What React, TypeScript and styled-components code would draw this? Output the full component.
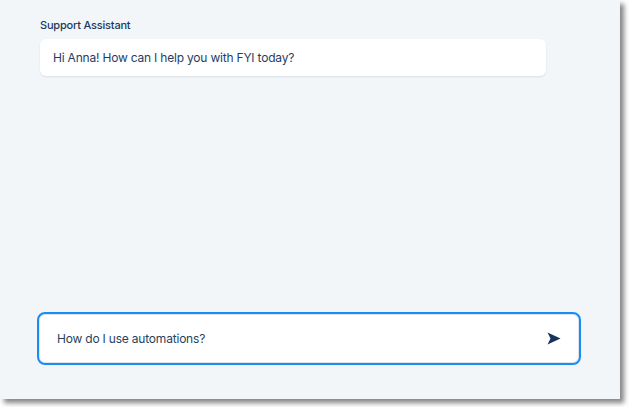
import React from "react";
import styled, { createGlobalStyle } from "styled-components";

const Global = createGlobalStyle`
  html, body { margin: 0; padding: 0; background: #ffffff; }
  body { font-family: Inter, "Noto Sans", "Liberation Sans", sans-serif; }
  * { box-sizing: border-box; }
`;

const Page = styled.div`
  width: 629px;
  height: 407px;
  background: #ffffff;
`;

const Panel = styled.div`
  width: 620px;
  height: 399px;
  background: #f3f6f9;
  box-shadow: 4px 4px 5px rgba(50, 50, 50, 0.6);
  display: flex;
  flex-direction: column;
  padding: 18px 39px 34px 37px;
`;

const Messages = styled.div`
  flex: 1;
  display: flex;
  flex-direction: column;
  padding-left: 3px;
`;

const Sender = styled.div`
  font-size: 11px;
  font-weight: 500;
  line-height: 14px;
  letter-spacing: -0.2px;
  color: #1b3960;
  margin-bottom: 7px;
`;

const Bubble = styled.div`
  width: 506px;
  height: 37px;
  background: #ffffff;
  border-radius: 6px;
  box-shadow: 0 1px 2px rgba(30, 60, 90, 0.12);
  display: flex;
  align-items: center;
  padding-left: 13px;
  font-size: 12px;
  letter-spacing: -0.2px;
  color: #1f3d66;
`;

const InputBox = styled.div`
  height: 53px;
  border: 2px solid #1a8cf5;
  border-radius: 8px;
  background: #ffffff;
  box-shadow: inset 0 0 0 1px #dfe4ea;
  display: flex;
  align-items: center;
  padding: 0 17px 0 18px;
`;

const InputText = styled.div`
  flex: 1;
  font-size: 12px;
  letter-spacing: -0.2px;
  color: #2a3f5c;
`;

const SendButton = styled.button`
  border: none;
  background: transparent;
  padding: 0;
  width: 16px;
  height: 14px;
  display: flex;
  align-items: center;
  justify-content: center;
  cursor: pointer;
`;

export default function App() {
  return (
    <>
      <Global />
      <Page>
        <Panel>
          <Messages>
            <Sender>Support Assistant</Sender>
            <Bubble>Hi Anna! How can I help you with FYI today?</Bubble>
          </Messages>
          <InputBox>
            <InputText>How do I use automations?</InputText>
            <SendButton aria-label="Send">
              <svg width="14" height="13" viewBox="0 0 14 13">
                <path d="M0.5 0.5 L13.5 6.5 L0.5 12.5 L3.5 6.5 Z" fill="#14335e" />
              </svg>
            </SendButton>
          </InputBox>
        </Panel>
      </Page>
    </>
  );
}
